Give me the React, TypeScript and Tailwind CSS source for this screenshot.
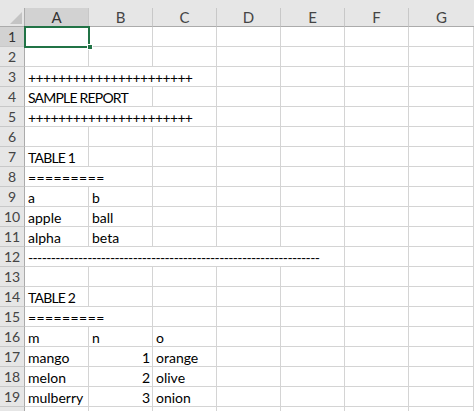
import React from "react";

const COLS = ["A", "B", "C", "D", "E", "F", "G"];

type Cell = { col: number; span?: number; t: string; right?: boolean; track?: string };

const PLUS = "++++++++++++++++++++++";
const EQ = "=========";
const DASH = "----------------------------------------------------------------";

const data: Record<number, Cell[]> = {
  3: [{ col: 0, span: 3, t: PLUS, track: "tracking-[-0.65px]" }],
  4: [{ col: 0, span: 2, t: "SAMPLE REPORT", track: "tracking-[-0.8px]" }],
  5: [{ col: 0, span: 3, t: PLUS, track: "tracking-[-0.65px]" }],
  7: [{ col: 0, t: "TABLE 1", track: "tracking-[-0.8px]" }],
  8: [{ col: 0, span: 2, t: EQ, track: "tracking-[0.4px]" }],
  9: [{ col: 0, t: "a" }, { col: 1, t: "b" }],
  10: [{ col: 0, t: "apple" }, { col: 1, t: "ball" }],
  11: [{ col: 0, t: "alpha" }, { col: 1, t: "beta" }],
  12: [{ col: 0, span: 5, t: DASH, track: "tracking-[-0.65px]" }],
  14: [{ col: 0, t: "TABLE 2", track: "tracking-[-0.8px]" }],
  15: [{ col: 0, span: 2, t: EQ, track: "tracking-[0.4px]" }],
  16: [{ col: 0, t: "m" }, { col: 1, t: "n" }, { col: 2, t: "o" }],
  17: [{ col: 0, t: "mango" }, { col: 1, t: "1", right: true }, { col: 2, t: "orange" }],
  18: [{ col: 0, t: "melon" }, { col: 1, t: "2", right: true }, { col: 2, t: "olive" }],
  19: [{ col: 0, t: "mulberry" }, { col: 1, t: "3", right: true }, { col: 2, t: "onion" }],
};

const SPAN: Record<number, string> = {
  1: "col-span-1",
  2: "col-span-2",
  3: "col-span-3",
  5: "col-span-5",
};

function Row({ r }: { r: number }) {
  const cells = data[r] || [];
  const out: React.ReactNode[] = [];
  let c = 0;
  while (c < 7) {
    const cell = cells.find((x) => x.col === c);
    const span = cell?.span ?? 1;
    out.push(
      <div
        key={c}
        className={`${SPAN[span]} flex h-[20px] border-b border-r border-[#d4d4d4] whitespace-nowrap overflow-hidden leading-[19px] pt-[1px] ${
          cell?.right ? "justify-end pr-[2px]" : "justify-start pl-[3px]"
        } ${cell?.track ?? ""}`}
      >
        {cell ? cell.t : ""}
      </div>
    );
    c += span;
  }
  return (
    <div className="grid grid-cols-[25px_repeat(6,64px)_65px] h-[20px]">
      <div
        className={`flex items-center justify-center border-r border-[#ababab] border-b border-b-[#c8c8c8] leading-none pt-[1px] ${
          r === 1 ? "bg-[#d2d2d2] text-[#333]" : "bg-[#e6e6e6] text-[#444]"
        }`}
      >
        {r <= 19 ? r : ""}
      </div>
      {out}
    </div>
  );
}

export default function App() {
  const rows = Array.from({ length: 20 }, (_, i) => i + 1);
  return (
    <div
      className="relative w-[474px] h-[411px] overflow-hidden bg-white text-[14px] text-black"
      style={{ fontFamily: "Lato, 'Open Sans', sans-serif" }}
    >
      {/* top strip */}
      <div className="h-[8px] bg-[#e6e6e6]" />
      {/* column header */}
      <div className="grid grid-cols-[25px_repeat(6,64px)_65px] h-[19px] bg-[#e6e6e6] text-[15px]">
        <div className="flex items-end justify-end pr-[2px] pb-[2px] border-r border-b border-[#ababab]">
          <div className="w-0 h-0 border-l-[12px] border-l-transparent border-b-[12px] border-b-[#c4c4c4]" />
        </div>
        {COLS.map((c, i) => (
          <div
            key={c}
            className={`flex items-center justify-center border-b border-[#ababab] leading-none pt-[1px] ${
              i < 6 ? "border-r border-r-[#c8c8c8]" : ""
            } ${i === 0 ? "bg-[#d2d2d2] text-[#333]" : "text-[#444]"}`}
          >
            {c}
          </div>
        ))}
      </div>
      {/* rows */}
      <div className="text-[14px]">
        {rows.map((r) => (
          <Row key={r} r={r} />
        ))}
      </div>
      {/* selection overlay on A1 */}
      <div className="absolute left-[24px] top-[26px] w-[66px] h-[22px] border-2 border-[#217346] z-10" />
      <div className="absolute left-[87px] top-[44px] w-[6px] h-[6px] bg-[#217346] border border-white z-20" />
    </div>
  );
}
